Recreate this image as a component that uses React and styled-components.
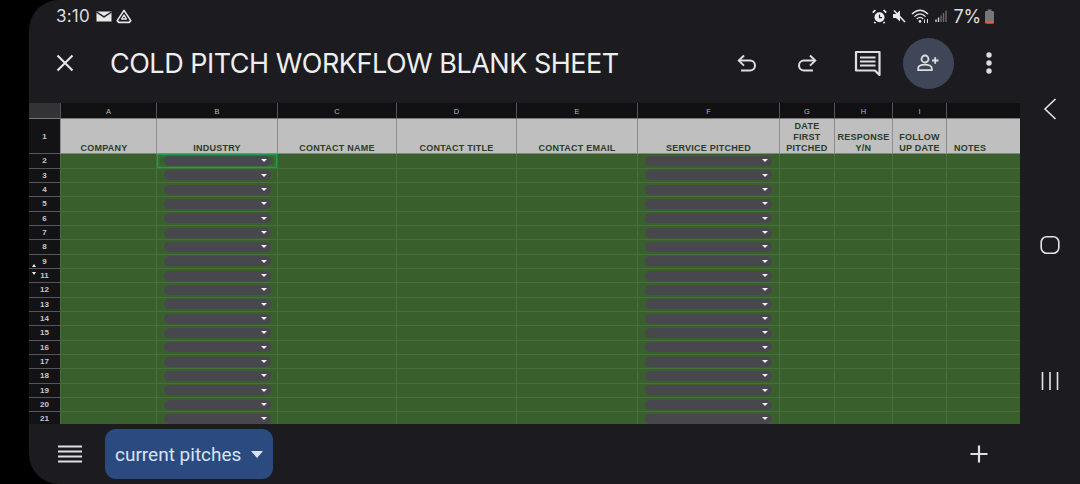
import React from "react";
import styled, { createGlobalStyle } from "styled-components";

const Global = createGlobalStyle`
  html, body { margin: 0; padding: 0; background: #000; }
  body { width: 1080px; height: 484px; overflow: hidden; font-family: "Open Sans", "Liberation Sans", sans-serif; }
  * { box-sizing: border-box; }
`;

const COLS = "31px 96px 121px 119px 120px 121px 142px 55px 58px 54px 74px";

const Page = styled.div`
  width: 1080px; height: 484px; background: #000; padding-left: 29px; display: flex;
`;
const Screen = styled.div`
  flex: 1; height: 484px; background: #1c1c20; border-radius: 30px 0 0 30px; display: flex; overflow: hidden;
`;
const Main = styled.div`
  width: 991px; display: flex; flex-direction: column; height: 484px;
`;
const Rail = styled.div`
  width: 60px; display: flex; flex-direction: column; align-items: center; padding-top: 97px; gap: 112px; color: #e4e4e6;
`;
const RailSlot = styled.div`
  height: 24px; display: flex; align-items: center; justify-content: center;
`;
const StatusBar = styled.div`
  height: 32px; display: flex; align-items: center; padding-left: 27px; color: #e6e6e8; flex-shrink: 0;
`;
const Time = styled.span`
  font-family: "Inter", sans-serif; font-size: 17px; letter-spacing: 0.2px; margin-right: 6px; color: #dcdcde;
`;
const StatusRight = styled.div`
  margin-left: auto; display: flex; align-items: center; gap: 5px; padding-right: 25px;
`;
const Percent = styled.span`
  font-family: "Inter", sans-serif; font-size: 18px; color: #dcdcde; margin-left: 1px; margin-right: -2px; letter-spacing: -0.2px;
`;
const AppBar = styled.div`
  height: 71px; display: flex; align-items: center; padding-left: 26px; color: #e6e6e8; flex-shrink: 0; padding-bottom: 9px;
`;
const Title = styled.h1`
  margin: 0 0 0 35px; font: 400 27px "Inter", sans-serif; letter-spacing: -0.5px; color: #eeeeef; white-space: nowrap;
`;
const Actions = styled.div`
  margin-left: auto; display: flex; align-items: center; padding-right: 1px; color: #dedee0;
`;
const ActionSlot = styled.div`
  width: ${p => p.$w}px; display: flex; justify-content: center; align-items: center;
`;
const ShareCircle = styled.div`
  width: 51px; height: 51px; border-radius: 50%; background: #3f4658; display: flex; align-items: center; justify-content: center; margin: 0 4.5px;
`;
const Sheet = styled.div`
  height: 321px; overflow: hidden; flex-shrink: 0; display: flex; flex-direction: column;
`;
const HeaderRow = styled.div`
  display: grid; grid-template-columns: ${COLS}; height: 16px; background: #111114; flex-shrink: 0;
`;
const Corner = styled.div`
  background: #333336; border-bottom: 1px solid #77777a;
`;
const Letter = styled.div`
  font: 400 7.5px "Liberation Sans", sans-serif; color: #b8b8b8; display: flex; align-items: center; justify-content: center; padding-top: 1px;
  border-left: 1px solid #55555a; border-bottom: 1px solid #77777a;
`;
const TitleRow = styled.div`
  display: grid; grid-template-columns: ${COLS}; height: 35.3px; flex-shrink: 0; background: #bfbfbf;
`;
const RowNum = styled.div`
  position: relative; background: #131316; color: #c8c8c8; font: 700 8px "Liberation Sans", sans-serif;
  display: flex; align-items: center; justify-content: center; border-bottom: 1px solid #55555a;
`;
const HeadCell = styled.div`
  font: 700 9px/10.8px "Liberation Sans", sans-serif; letter-spacing: 0.25px; color: #2c3a28; text-align: ${p => p.$left ? "left" : "center"};
  display: flex; align-items: flex-end; justify-content: ${p => p.$left ? "flex-start" : "center"};
  padding: ${p => p.$left ? "0 0 0 7px" : `0 ${p.$nudge || 1}px 0 1px`}; border-left: 1px solid #8e8e8e; border-bottom: 1px solid #7d8a79;
`;
const DataRow = styled.div`
  display: grid; grid-template-columns: ${COLS}; height: 14.33px; flex-shrink: 0; background: #39602c;
`;
const Cell = styled.div`
  position: relative; border-left: 1px solid #486e3c; border-bottom: 1px solid #486e3c;
  display: flex; align-items: center; justify-content: center;
  ${p => p.$active ? "box-shadow: inset 0 0 0 1px #1f9a56, inset 0 0 3px 2px rgba(31,154,86,.55);" : ""}
`;
const Chip = styled.div`
  width: ${p => p.$w}px; height: 10px; border-radius: 5px; background: #47474d; display: flex; align-items: center; justify-content: flex-end; padding-right: 4px;
`;
const ChipArrow = styled.span`
  width: 0; height: 0; border-left: 3.5px solid transparent; border-right: 3.5px solid transparent; border-top: 3.5px solid #f2f2f2;
`;
const Fold = styled.span`
  position: absolute; left: 3px; top: ${p => p.$up ? 9 : 3}px; width: 0; height: 0;
  border-left: 2.5px solid transparent; border-right: 2.5px solid transparent;
  ${p => p.$up ? "border-bottom: 3px solid #eee;" : "border-top: 3px solid #eee;"}
`;
const BottomBar = styled.div`
  flex: 1; display: flex; align-items: center; padding-left: 29px; color: #e0e0e2;
`;
const Tab = styled.div`
  width: 168px; height: 50px; margin-left: 23px; border-radius: 11px; background: #2b4b80; display: flex; align-items: center; padding-left: 10px; color: #d9e3f5;
  font: 400 19px "Roboto", sans-serif; gap: 10px; white-space: nowrap;
`;
const TabArrow = styled.span`
  width: 0; height: 0; border-left: 6.5px solid transparent; border-right: 6.5px solid transparent; border-top: 7px solid #d9e3f5;
`;
const AddSlot = styled.div`
  margin-left: auto; margin-right: 31px; display: flex;
`;

const Ico = ({ w, h, children, vb }) => (
  <svg width={w} height={h} viewBox={vb || `0 0 ${w} ${h}`} fill="none" stroke="currentColor" style={{ display: "block", flexShrink: 0 }}>{children}</svg>
);

const letters = ["A", "B", "C", "D", "E", "F", "G", "H", "I", ""];
const heads = [
  ["COMPANY"], ["INDUSTRY"], ["CONTACT NAME"], ["CONTACT TITLE"], ["CONTACT EMAIL"], ["SERVICE PITCHED"],
  ["DATE", "FIRST", "PITCHED"], ["RESPONSE", "Y/N"], ["FOLLOW", "UP DATE"], ["NOTES"],
];
const rows = [2, 3, 4, 5, 6, 7, 8, 9, 11, 12, 13, 14, 15, 16, 17, 18, 19, 20, 21];

function Row({ n }) {
  return (
    <DataRow>
      <RowNum>
        {n}
        {n === 9 && <Fold $up />}
        {n === 11 && <Fold />}
      </RowNum>
      {letters.map((l, i) => (
        <Cell key={i} $active={n === 2 && i === 1}>
          {i === 1 && <Chip $w={107}><ChipArrow /></Chip>}
          {i === 5 && <Chip $w={127}><ChipArrow /></Chip>}
        </Cell>
      ))}
    </DataRow>
  );
}

export default function App() {
  return (
    <>
      <Global />
      <Page>
        <Screen>
          <Main>
            <StatusBar>
              <Time>3:10</Time>
              <Ico w={16} h={12}>
                <path d="M0.5 1.5h15v10h-15z" fill="#e8e8e8" stroke="none" />
                <path d="M0.5 2 L8 6.8 L15.5 2" stroke="#1c1c20" strokeWidth="1.4" />
              </Ico>
              <span style={{ width: 4 }} />
              <Ico w={16} h={15}>
                <path d="M8 1.4 L14.8 11.6 L13.2 13.4 H2.8 L1.2 11.6 Z" strokeWidth="1.6" strokeLinejoin="round" />
                <path d="M8 6 L10.4 10 H5.6 Z" strokeWidth="1.4" strokeLinejoin="round" />
              </Ico>
              <StatusRight>
                <Ico w={15} h={15}>
                  <circle cx="7.5" cy="8.2" r="5" fill="#eee" stroke="none" />
                  <path d="M7.5 5.4V8.6H10" stroke="#1c1c20" strokeWidth="1.2" />
                  <path d="M0.8 3.6 L3.4 1.2 M14.2 3.6 L11.6 1.2 M3.4 13 L2.4 14.2 M11.6 13 L12.6 14.2" strokeWidth="1.8" stroke="#eee" />
                </Ico>
                <Ico w={14} h={14}>
                  <path d="M1 5h3l4-3.5v11L4 9H1z" fill="#e8e8e8" stroke="none" />
                  <path d="M2 1.5 L13 13" strokeWidth="1.6" stroke="#e8e8e8" />
                </Ico>
                <Ico w={19} h={16}>
                  <path d="M1 6 Q9 -1.5 17 6" strokeWidth="1.3" />
                  <path d="M3.4 8.6 Q9 3 14.6 8.6" strokeWidth="1.3" />
                  <path d="M5.8 11 Q9 7.8 12.2 11" strokeWidth="1.3" />
                  <circle cx="9" cy="13.4" r="1.3" fill="#e6e6e8" stroke="none" />
                  <path d="M13.5 15 V11.5 M16.5 11 V15" strokeWidth="1" />
                </Ico>
                <Ico w={13} h={14}>
                  <path d="M1 13V10.5M3.5 13V8.5" stroke="#cfcfcf" strokeWidth="1.4" />
                  <path d="M6 13V6.5M8.5 13V4M11 13V1.5" stroke="#6a6a6e" strokeWidth="1.4" />
                </Ico>
                <Percent>7%</Percent>
                <Ico w={11} h={15}>
                  <path d="M3.5 0.5h4v2h-4z" fill="#77777a" stroke="none" />
                  <rect x="1" y="2" width="9" height="12.5" rx="1.2" fill="#77777a" stroke="none" />
                  <path d="M1 12.2h9v1.1a1.2 1.2 0 0 1-1.2 1.2H2.2A1.2 1.2 0 0 1 1 13.3z" fill="#d9603f" stroke="none" />
                </Ico>
              </StatusRight>
            </StatusBar>
            <AppBar>
              <Ico w={20} h={20}>
                <path d="M2.5 2.5 L17.5 17.5 M17.5 2.5 L2.5 17.5" strokeWidth="2.1" />
              </Ico>
              <Title>COLD PITCH WORKFLOW BLANK SHEET</Title>
              <Actions>
                <ActionSlot $w={60}>
                  <Ico w={22} h={22}>
                    <path d="M8 3.5 L2.8 8.6 L8 13.6" strokeWidth="2" />
                    <path d="M3 8.6 H14 a5 5 0 0 1 0 10 H5" strokeWidth="2" />
                  </Ico>
                </ActionSlot>
                <ActionSlot $w={60}>
                  <Ico w={22} h={22}>
                    <path d="M14 3.5 L19.2 8.6 L14 13.6" strokeWidth="2" />
                    <path d="M19 8.6 H8 a5 5 0 0 0 0 10 H17" strokeWidth="2" />
                  </Ico>
                </ActionSlot>
                <ActionSlot $w={61}>
                  <Ico w={28} h={27}>
                    <path d="M2 2 H25.5 V25 L21 20.5 H2 Z" strokeWidth="2.2" strokeLinejoin="round" />
                    <path d="M6 7.5 H21.5 M6 11.5 H21.5 M6 15.5 H21.5" strokeWidth="2.2" />
                  </Ico>
                </ActionSlot>
                <ShareCircle>
                  <Ico w={22} h={18}>
                    <circle cx="8" cy="5" r="3.5" strokeWidth="1.8" />
                    <path d="M1.2 16.2 V14.2 C1.2 11.8 4.5 10.6 8 10.6 S14.8 11.8 14.8 14.2 V16.2 Z" strokeWidth="1.8" />
                    <path d="M15 6.5 H21.5 M18.2 3.2 V9.8" strokeWidth="1.8" />
                  </Ico>
                </ShareCircle>
                <ActionSlot $w={61}>
                  <Ico w={8} h={24} vb="0 0 8 24">
                    <circle cx="4" cy="4" r="2.7" fill="#dedee0" stroke="none" />
                    <circle cx="4" cy="12" r="2.7" fill="#dedee0" stroke="none" />
                    <circle cx="4" cy="20" r="2.7" fill="#dedee0" stroke="none" />
                  </Ico>
                </ActionSlot>
              </Actions>
            </AppBar>
            <Sheet>
              <HeaderRow>
                <Corner />
                {letters.map((l, i) => <Letter key={i}>{l}</Letter>)}
              </HeaderRow>
              <TitleRow>
                <RowNum>1</RowNum>
                {heads.map((h, i) => (
                  <HeadCell key={i} $left={i === 9} $nudge={i === 0 ? 10 : 1}>
                    <span>{h.map((t, j) => <React.Fragment key={j}>{j > 0 && <br />}{t}</React.Fragment>)}</span>
                  </HeadCell>
                ))}
              </TitleRow>
              {rows.map(n => <Row key={n} n={n} />)}
            </Sheet>
            <BottomBar>
              <Ico w={24} h={18}>
                <path d="M0 1.5H24M0 6.5H24M0 11.5H24M0 16.5H24" strokeWidth="1.9" />
              </Ico>
              <Tab>current pitches<TabArrow /></Tab>
              <AddSlot>
                <Ico w={20} h={20}>
                  <path d="M1.5 10H18.5M10 1.5V18.5" strokeWidth="2.2" />
                </Ico>
              </AddSlot>
            </BottomBar>
          </Main>
          <Rail>
            <RailSlot>
              <Ico w={14} h={24}>
                <path d="M12.5 2 L2 12 L12.5 22" strokeWidth="1.6" />
              </Ico>
            </RailSlot>
            <RailSlot>
              <Ico w={20} h={20}>
                <rect x="1.2" y="1.8" width="17.6" height="16.4" rx="5.5" strokeWidth="1.6" />
              </Ico>
            </RailSlot>
            <RailSlot>
              <Ico w={20} h={20}>
                <path d="M2.5 1V19M10 1V19M17.5 1V19" strokeWidth="1.6" />
              </Ico>
            </RailSlot>
          </Rail>
        </Screen>
      </Page>
    </>
  );
}
